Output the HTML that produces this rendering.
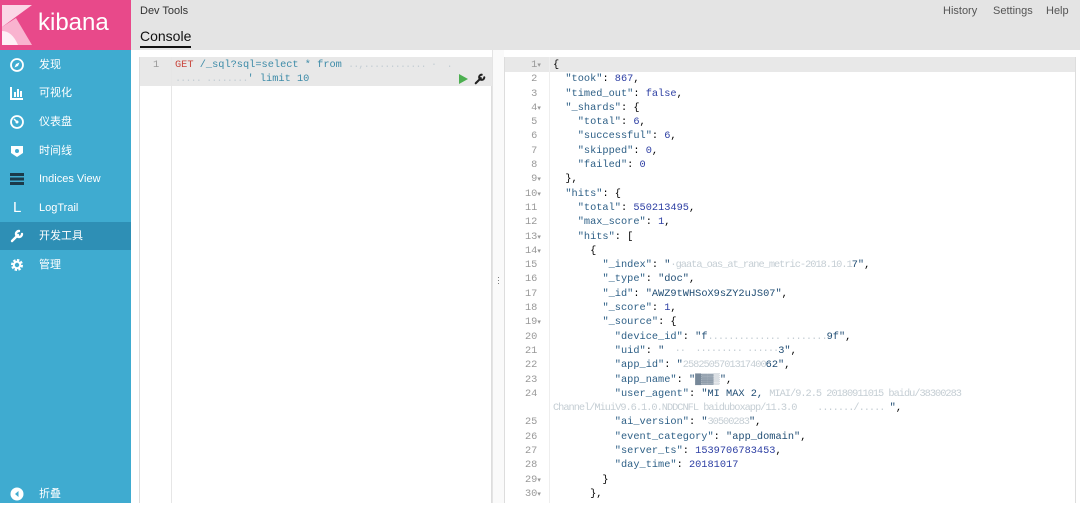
<!DOCTYPE html>
<html><head><meta charset="utf-8"><style>
*{margin:0;padding:0;box-sizing:border-box}
body{width:1080px;height:503px;overflow:hidden;background:#fff;font-family:"Liberation Sans","Noto Sans CJK SC",sans-serif;position:relative}
#side{position:absolute;left:0;top:0;width:131px;height:503px;background:#3fabd0}
#logo{height:50px;background:#e8498a;position:relative}
#logo span{position:absolute;left:38px;top:9px;color:#fff;font-size:24px}
.item{position:absolute;left:0;width:131px;height:28px;color:#fff;font-size:11px;line-height:28px;padding-left:39px}
.item.act{background:#2e8fb5}
.ic{position:absolute;left:10px;top:7px;width:14px;height:14px}
#top{position:absolute;left:131px;top:0;right:0;height:50px;background:#e4e4e4}
#top .t{position:absolute;left:9px;top:5px;font-size:11px;color:#333}
#top .c{position:absolute;left:9px;top:28px;font-size:14px;color:#111;border-bottom:2px solid #111;padding-bottom:2px}
#top .r{position:absolute;top:5px;font-size:11px;color:#555}
.mono{font-family:"Liberation Mono",monospace;font-size:10.3px;line-height:14.3px;white-space:pre}
#lp{position:absolute;left:139px;top:57px;width:353px;height:446px;background:#fff;border-left:1px solid #ddd;border-right:1px solid #ddd}
#rp{position:absolute;left:504px;top:57px;width:572px;height:446px;background:#fff;border-left:1px solid #ddd;border-right:1px solid #ddd}
#div{position:absolute;left:492px;top:50px;width:12px;height:453px;background:#fafafa;border-left:1px solid #e4e4e4}
.k{color:#2d5f86}.s{color:#1f4c73}.n{color:#2c3ea3}.g{color:#999}
.bl{color:#c5ced4;letter-spacing:-1px}
.ar{font-size:7px;line-height:0}
</style></head><body>
<div id="side">
 <div id="logo">
  <svg style="position:absolute;left:2px;top:5px" width="30" height="40" viewBox="0 0 30 40"><polygon points="0,0 30,0 0,22" fill="#fbd6e6"/><polygon points="0,22 14,13 30,40 0,40" fill="#f9b3cf"/><path d="M0,26 Q10,26 16,40 L0,40Z" fill="#fff" opacity=".8"/></svg>
  <span>kibana</span></div>
 <div class="item" style="top:51px"><svg class="ic" viewBox="0 0 14 14"><circle cx="7" cy="7" r="6" fill="none" stroke="#fff" stroke-width="1.8"/><path d="M9.5 4.5L6 6 4.5 9.5 8 8Z" fill="#fff"/></svg>发现</div>
 <div class="item" style="top:79px"><svg class="ic" viewBox="0 0 14 14"><path d="M1 1v12h12" fill="none" stroke="#fff" stroke-width="2"/><rect x="4" y="6" width="2" height="5" fill="#fff"/><rect x="7" y="3" width="2" height="8" fill="#fff"/><rect x="10" y="5" width="2" height="6" fill="#fff"/></svg>可视化</div>
 <div class="item" style="top:108px"><svg class="ic" viewBox="0 0 14 14"><circle cx="7" cy="7" r="6" fill="none" stroke="#fff" stroke-width="1.8"/><circle cx="7" cy="7" r="1.5" fill="#fff"/><path d="M7 7L4 4" stroke="#fff" stroke-width="1.5"/></svg>仪表盘</div>
 <div class="item" style="top:137px"><svg class="ic" viewBox="0 0 14 14"><path d="M1 2h12v7l-6 4-6-4z" fill="#fff"/><circle cx="7" cy="7" r="2" fill="#3fabd0"/></svg>时间线</div>
 <div class="item" style="top:165px"><svg class="ic" viewBox="0 0 14 14"><rect x="0" y="1" width="14" height="3" fill="#1b3a4a"/><rect x="0" y="5.5" width="14" height="3" fill="#1b3a4a"/><rect x="0" y="10" width="14" height="3" fill="#1b3a4a"/></svg>Indices View</div>
 <div class="item" style="top:194px"><span style="position:absolute;left:13px;font-size:15px">L</span>LogTrail</div>
 <div class="item act" style="top:222px"><svg class="ic" viewBox="0 0 14 14"><path d="M2 12L8 6M9 2a3 3 0 1 0 3 3" stroke="#fff" stroke-width="2.4" fill="none" stroke-linecap="round"/></svg>开发工具</div>
 <div class="item" style="top:251px"><svg class="ic" viewBox="0 0 14 14"><circle cx="7" cy="7" r="4.5" fill="none" stroke="#fff" stroke-width="3" stroke-dasharray="2.2 1.3"/><circle cx="7" cy="7" r="3.2" fill="none" stroke="#fff" stroke-width="2"/></svg>管理</div>
 <div class="item" style="top:480px"><svg class="ic" viewBox="0 0 14 14"><circle cx="7" cy="7" r="6.5" fill="#fff"/><path d="M8.5 4L5 7l3.5 3z" fill="#3fabd0"/></svg>折叠</div>
</div>
<div id="top"><div class="t">Dev Tools</div><div class="c">Console</div>
<div class="r" style="left:812px">History</div><div class="r" style="left:862px">Settings</div><div class="r" style="left:915px">Help</div></div>
<div id="lp">
 <div style="position:absolute;left:0;top:0;width:352px;height:29px;background:#e8e8e8"></div>
 <div style="position:absolute;left:31px;top:0;width:1px;height:446px;background:#e6e6e6"></div>
 <div class="mono g" style="position:absolute;left:13px;top:1px">1</div>
 <div class="mono" style="position:absolute;left:35px;top:1px"><span style="color:#c9463d">GET</span> <span style="color:#3d8ba8">/_sql?sql=select * from</span> <span class="bl">..,............ ·  .</span>
<span class="bl">..... ........</span><span style="color:#3d8ba8">' limit 10</span></div>
 <svg style="position:absolute;left:318px;top:17px" width="10" height="10"><path d="M1 0v10l9-5z" fill="#4caf50"/></svg>
 <svg style="position:absolute;left:334px;top:16px" width="12" height="12" viewBox="0 0 14 14"><path d="M2 12L8 6M9 2a3 3 0 1 0 3 3" stroke="#222" stroke-width="2.4" fill="none" stroke-linecap="round"/></svg>
</div>
<div id="div"><div style="position:absolute;left:4px;top:226px;color:#666;font-size:9px;line-height:3px">·<br>·<br>·</div></div>
<div id="rp">
 <div style="position:absolute;left:0;top:0;width:570px;height:15px;background:#e8e8e8"></div>
 <div style="position:absolute;left:44px;top:0;width:1px;height:446px;background:#eee"></div>
 <div class="mono g" style="position:absolute;left:20px;top:1px"> 1<span class="ar">▾</span>
 2
 3
 4<span class="ar">▾</span>
 5
 6
 7
 8
 9<span class="ar">▾</span>
10<span class="ar">▾</span>
11
12
13<span class="ar">▾</span>
14<span class="ar">▾</span>
15
16
17
18
19<span class="ar">▾</span>
20
21
22
23
24

25
26
27
28
29<span class="ar">▾</span>
30<span class="ar">▾</span></div>
 <div class="mono" style="position:absolute;left:48px;top:1px">{
  <span class="k">"took"</span>: <span class="n">867</span>,
  <span class="k">"timed_out"</span>: <span class="n">false</span>,
  <span class="k">"_shards"</span>: {
    <span class="k">"total"</span>: <span class="n">6</span>,
    <span class="k">"successful"</span>: <span class="n">6</span>,
    <span class="k">"skipped"</span>: <span class="n">0</span>,
    <span class="k">"failed"</span>: <span class="n">0</span>
  },
  <span class="k">"hits"</span>: {
    <span class="k">"total"</span>: <span class="n">550213495</span>,
    <span class="k">"max_score"</span>: <span class="n">1</span>,
    <span class="k">"hits"</span>: [
      {
        <span class="k">"_index"</span>: <span class="s">"<span class="bl">·gaata_oas_at_rane_metric-2018.10.1</span>7"</span>,
        <span class="k">"_type"</span>: <span class="s">"doc"</span>,
        <span class="k">"_id"</span>: <span class="s">"AWZ9tWHSoX9sZY2uJS07"</span>,
        <span class="k">"_score"</span>: <span class="n">1</span>,
        <span class="k">"_source"</span>: {
          <span class="k">"device_id"</span>: <span class="s">"f<span class="bl">.............. ........</span>9f"</span>,
          <span class="k">"uid"</span>: <span class="s">"<span class="bl">  ··  ········· ······</span>3"</span>,
          <span class="k">"app_id"</span>: <span class="s">"<span class="bl">2582505701317400</span>62"</span>,
          <span class="k">"app_name"</span>: <span class="s">"<span style="color:#789">█▓▓▒</span>"</span>,
          <span class="k">"user_agent"</span>: <span class="s">"MI MAX 2, <span class="bl">MIAI/9.2.5 20180911015 baidu/38300283</span></span>
<span class="bl">Channel/MiuiV9.6.1.0.NDDCNFL baiduboxapp/11.3.0    ......./..... </span><span class="s">"</span>,
          <span class="k">"ai_version"</span>: <span class="s">"<span class="bl">30500283</span>"</span>,
          <span class="k">"event_category"</span>: <span class="s">"app_domain"</span>,
          <span class="k">"server_ts"</span>: <span class="n">1539706783453</span>,
          <span class="k">"day_time"</span>: <span class="n">20181017</span>
        }
      },</div>
</div>
</body></html>
